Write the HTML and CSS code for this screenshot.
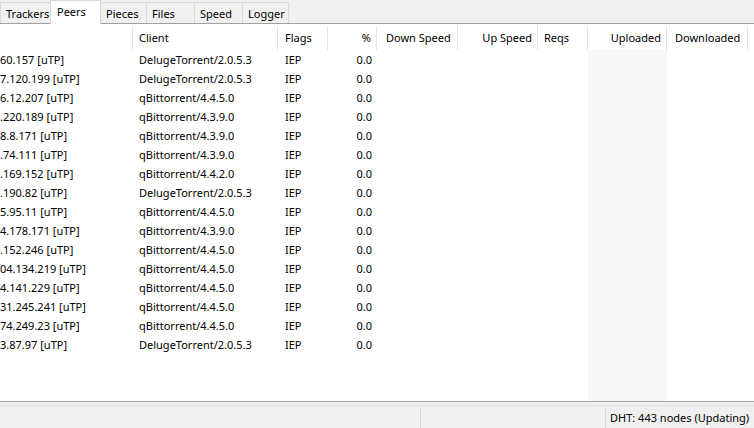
FILE: index.html
```html
<!DOCTYPE html>
<html lang="en">
<head>
  <meta charset="UTF-8">
  <title>Peers</title>
  <link rel="stylesheet" href="styles.css">
</head>
<body>
  <!-- Tabs -->
  <div class="tabbar">
    <div class="tab">Trackers</div>
    <div class="tab active">Peers</div>
    <div class="tab">Pieces</div>
    <div class="tab">Files</div>
    <div class="tab">Speed</div>
    <div class="tab">Logger</div>
  </div>

  <!-- Peer list -->
  <div class="list">
    <div class="row head">
      <div class="c ip"></div>
      <div class="c client">Client</div>
      <div class="c flags">Flags</div>
      <div class="c pct r">%</div>
      <div class="c down">Down Speed</div>
      <div class="c up r">Up Speed</div>
      <div class="c reqs">Reqs</div>
      <div class="c upl r">Uploaded</div>
      <div class="c dl">Downloaded</div>
    </div>
    <div id="rows"></div>
  </div>

  <!-- Status bar -->
  <div class="statusbar">
    <div class="panel grow"></div>
    <div class="panel mid"></div>
    <div class="panel dht">DHT: 443 nodes (Updating)</div>
  </div>

  <script>
    const peers = [
      ["60.157 [uTP]", "DelugeTorrent/2.0.5.3"],
      ["7.120.199 [uTP]", "DelugeTorrent/2.0.5.3"],
      ["6.12.207 [uTP]", "qBittorrent/4.4.5.0"],
      [".220.189 [uTP]", "qBittorrent/4.3.9.0"],
      ["8.8.171 [uTP]", "qBittorrent/4.3.9.0"],
      [".74.111 [uTP]", "qBittorrent/4.3.9.0"],
      [".169.152 [uTP]", "qBittorrent/4.4.2.0"],
      [".190.82 [uTP]", "DelugeTorrent/2.0.5.3"],
      ["5.95.11 [uTP]", "qBittorrent/4.4.5.0"],
      ["4.178.171 [uTP]", "qBittorrent/4.3.9.0"],
      [".152.246 [uTP]", "qBittorrent/4.4.5.0"],
      ["04.134.219 [uTP]", "qBittorrent/4.4.5.0"],
      ["4.141.229 [uTP]", "qBittorrent/4.4.5.0"],
      ["31.245.241 [uTP]", "qBittorrent/4.4.5.0"],
      ["74.249.23 [uTP]", "qBittorrent/4.4.5.0"],
      ["3.87.97 [uTP]", "DelugeTorrent/2.0.5.3"]
    ];

    const rows = document.getElementById("rows");
    peers.forEach(function (p) {
      const row = document.createElement("div");
      row.className = "row";
      row.innerHTML =
        '<div class="c ip">' + p[0] + '</div>' +
        '<div class="c client">' + p[1] + '</div>' +
        '<div class="c flags">IEP</div>' +
        '<div class="c pct r">0.0</div>' +
        '<div class="c down"></div>' +
        '<div class="c up r"></div>' +
        '<div class="c reqs"></div>' +
        '<div class="c upl r"></div>' +
        '<div class="c dl"></div>';
      rows.appendChild(row);
    });
  </script>
</body>
</html>
```

FILE: styles.css
```css
html, body {
  margin: 0;
  padding: 0;
  height: 428px;
  overflow: hidden;
}

body {
  font-family: 'Noto Sans', 'Open Sans', sans-serif;
  font-size: 11px;
  color: #000;
  background-color: #fff;
  display: flex;
  flex-direction: column;
}

/* Tabs */
.tabbar {
  height: 23px;
  background-color: #f0f0f0;
  border-bottom: 1px solid #a0a0a0;
  display: flex;
  align-items: flex-end;
  flex-shrink: 0;
}

.tab {
  height: 21px;
  line-height: 21px;
  padding: 0 5px;
  border: 1px solid #d9d9d9;
  border-bottom: none;
  margin-right: -1px;
  box-sizing: border-box;
  white-space: nowrap;
}

.tab:nth-child(1) { width: 51px; }
.tab:nth-child(2) { width: 51px; }
.tab:nth-child(3) { width: 47px; }
.tab:nth-child(4) { width: 49px; }
.tab:nth-child(5) { width: 49px; }
.tab:nth-child(6) { width: 47px; }

.tab.active {
  background-color: #fff;
  height: 24px;
  line-height: 21px;
  margin-bottom: -1px;
  padding-left: 6px;
  position: relative;
}

/* Peer list */
.list {
  flex: 1;
  background:
    linear-gradient(#f7f7f7, #f7f7f7) 588px 26px / 79px 100% no-repeat,
    #fff;
}

.row {
  display: grid;
  grid-template-columns: 133px 145px 50px 49px 81px 80px 50px 79px 81px;
  height: 19px;
  line-height: 19px;
}

.row.head {
  height: 26px;
  background-color: #fff;
}

.c {
  padding: 0 6px;
  white-space: nowrap;
  overflow: hidden;
}

.c.r {
  text-align: right;
  padding-right: 5px;
}

.c.ip {
  padding: 0;
}

.head .c {
  border-right: 1px solid #e5e5e5;
  box-sizing: border-box;
  height: 24px;
  margin-top: 2px;
  line-height: 23px;
}

.c.flags {
  padding-left: 7px;
}

.c.down {
  padding-left: 9px;
}

.c.dl {
  padding-left: 8px;
}

/* Status bar */
.statusbar {
  height: 27px;
  flex-shrink: 0;
  background-color: #f0f0f0;
  border-top: 1px solid #a0a0a0;
  box-shadow: inset 0 3px 0 #f0f0f0, inset 0 4px 0 #dcdcdc;
  display: flex;
  padding-top: 6px;
  box-sizing: border-box;
}

.panel {
  height: 20px;
  line-height: 19px;
  border-right: 1px solid #d9d9d9;
  flex-shrink: 0;
  box-sizing: border-box;
}

.panel.grow {
  width: 421px;
}

.panel.mid {
  width: 185px;
}

.panel.dht {
  border-right: none;
  padding-left: 4px;
  flex: 1;
  white-space: nowrap;
}
```
